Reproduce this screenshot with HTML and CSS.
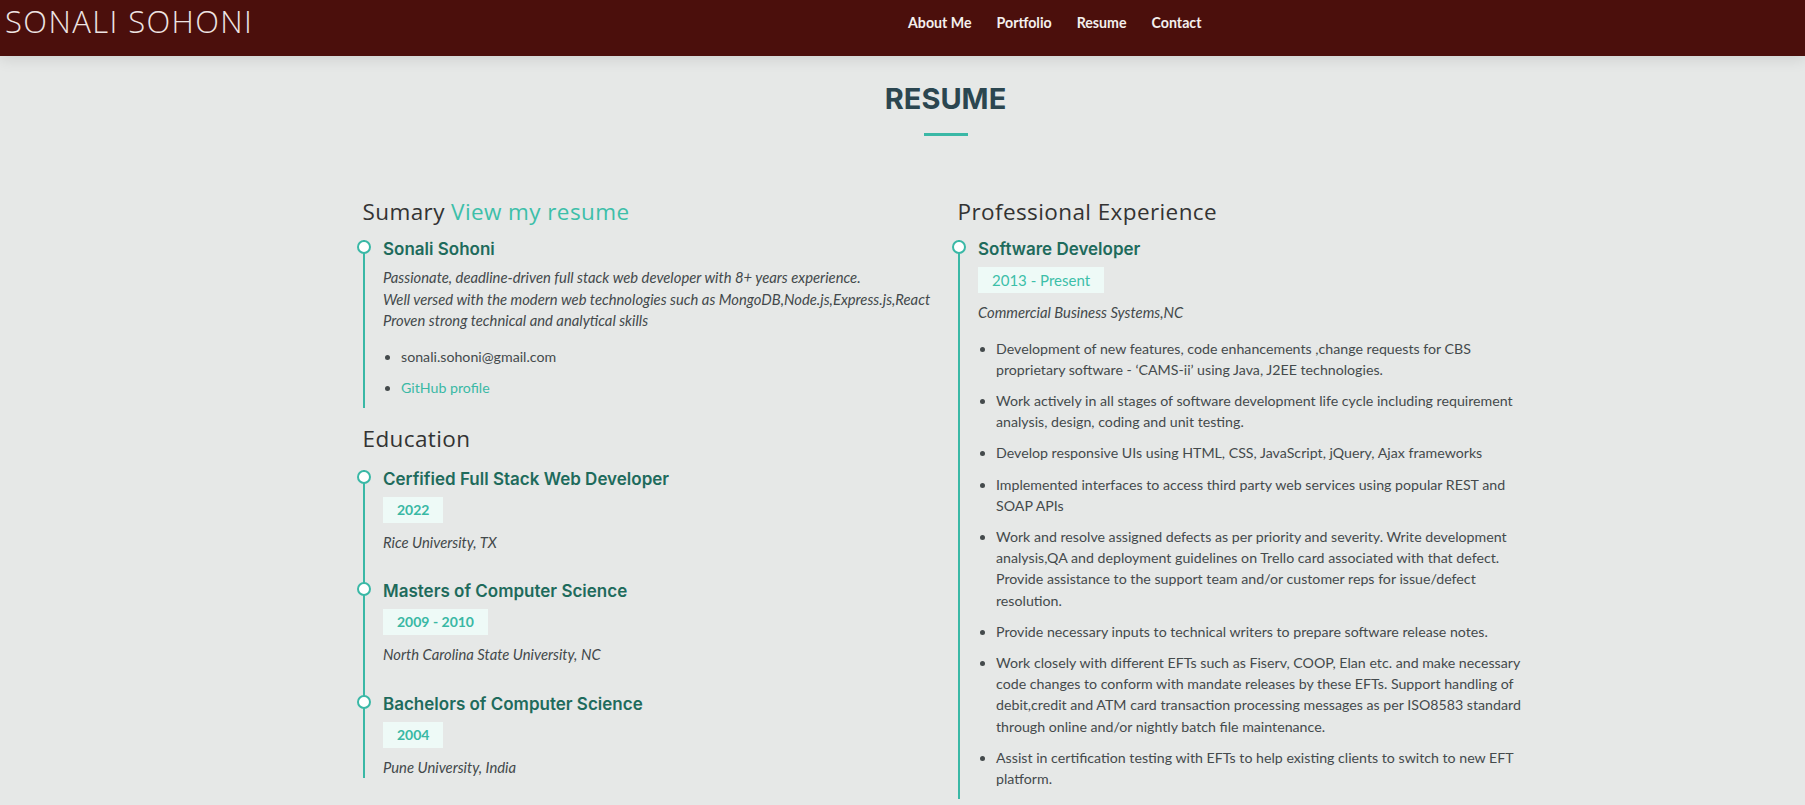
FILE: index.html
```html
<!DOCTYPE html>
<html lang="en">
<head>
<meta charset="utf-8">
<title>Sonali Sohoni - Resume</title>
<link rel="stylesheet" href="styles.css">
</head>
<body>
<header class="topbar">
  <a class="logo" href="#">SONALI SOHONI</a>
  <nav class="nav">
    <a href="#">About Me</a>
    <a href="#">Portfolio</a>
    <a href="#">Resume</a>
    <a href="#">Contact</a>
  </nav>
</header>
<main class="resume">
  <div class="container">
    <div class="section-title">
      <h2>RESUME</h2>
      <span class="title-line"></span>
    </div>
    <div class="resume-grid">
      <div class="col">
        <h3 class="resume-title">Sumary <a href="#">View my resume</a></h3>
        <div class="resume-item flush">
          <h4>Sonali Sohoni</h4>
          <p class="intro">Passionate, deadline-driven full stack web developer with 8+ years experience.<br>Well versed with the modern web technologies such as MongoDB,Node.js,Express.js,React<br>Proven strong technical and analytical skills</p>
          <ul>
            <li>sonali.sohoni@gmail.com</li>
            <li><a href="#">GitHub profile</a></li>
          </ul>
        </div>
        <h3 class="resume-title">Education</h3>
        <div class="resume-item">
          <h4>Cerfified Full Stack Web Developer</h4>
          <h5 class="badge edu">2022</h5>
          <p class="place">Rice University, TX</p>
        </div>
        <div class="resume-item">
          <h4>Masters of Computer Science</h4>
          <h5 class="badge edu">2009 - 2010</h5>
          <p class="place">North Carolina State University, NC</p>
        </div>
        <div class="resume-item flush">
          <h4>Bachelors of Computer Science</h4>
          <h5 class="badge edu">2004</h5>
          <p class="place">Pune University, India</p>
        </div>
      </div>
      <div class="col">
        <h3 class="resume-title">Professional Experience</h3>
        <div class="resume-item flush">
          <h4>Software Developer</h4>
          <h5 class="badge exp">2013 - Present</h5>
          <p class="place company">Commercial Business Systems,NC</p>
          <ul>
            <li>Development of new features, code enhancements ,change requests for CBS proprietary software - ‘CAMS-ii’ using Java, J2EE technologies.</li>
            <li>Work actively in all stages of software development life cycle including requirement analysis, design, coding and unit testing.</li>
            <li>Develop responsive UIs using HTML, CSS, JavaScript, jQuery, Ajax frameworks</li>
            <li>Implemented interfaces to access third party web services using popular REST and SOAP APIs</li>
            <li>Work and resolve assigned defects as per priority and severity. Write development analysis,QA and deployment guidelines on Trello card associated with that defect. Provide assistance to the support team and/or customer reps for issue/defect resolution.</li>
            <li>Provide necessary inputs to technical writers to prepare software release notes.</li>
            <li>Work closely with different EFTs such as Fiserv, COOP, Elan etc. and make necessary code changes to conform with mandate releases by these EFTs. Support handling of debit,credit and ATM card transaction processing messages as per ISO8583 standard through online and/or nightly batch file maintenance.</li>
            <li>Assist in certification testing with EFTs to help existing clients to switch to new EFT platform.</li>
          </ul>
        </div>
      </div>
    </div>
  </div>
</main>
</body>
</html>
```
FILE: styles.css
```css
html {
  scrollbar-width: none;
}
html::-webkit-scrollbar {
  display: none;
}
body {
  margin: 0;
  background: #e6e8e7;
  font-family: Lato, "Liberation Sans", sans-serif;
  font-size: 14px;
  color: #444;
}
a {
  text-decoration: none;
}

/* Top bar */
.topbar {
  position: relative;
  z-index: 2;
  height: 56px;
  box-sizing: border-box;
  padding-left: 5px;
  display: flex;
  align-items: flex-start;
  background: #4b0f0c;
  box-shadow: 0 2px 15px rgba(0, 0, 0, 0.12);
}
.logo {
  width: 903px;
  flex: none;
  padding-top: 6px;
  font-family: "Open Sans", sans-serif;
  font-weight: 300;
  font-size: 31px;
  line-height: 31px;
  letter-spacing: 1.4px;
  color: #eee4e3;
}
.nav {
  display: flex;
  gap: 25px;
  padding-top: 16px;
}
.nav a {
  font-family: Lato, sans-serif;
  font-weight: 700;
  font-size: 14.2px;
  line-height: 14.5px;
  color: #f4efee;
}

/* Resume section */
.resume {
  padding: 25px 0 0 86px;
}
.container {
  width: 1166px;
  margin: 0 auto;
}
.section-title {
  text-align: center;
}
.section-title h2 {
  margin: 0;
  font-family: Inter, sans-serif;
  font-weight: 700;
  font-size: 29px;
  line-height: 35px;
  color: #2b4650;
}
.title-line {
  display: block;
  width: 44px;
  height: 3px;
  margin: 17px auto 0;
  background: #3ab8a6;
}
.resume-grid {
  display: grid;
  grid-template-columns: 571px 567px;
  column-gap: 24px;
  margin-top: 63px;
}
.resume-title {
  margin: 18px 0 21px;
  font-family: "Open Sans", sans-serif;
  font-weight: 400;
  font-size: 22.5px;
  line-height: 26px;
  letter-spacing: 0.4px;
  color: #333;
}
.col > .resume-title:first-child {
  margin: 0 0 18px;
}
.resume-title a {
  color: #3dbfa9;
}

.resume-item {
  position: relative;
  border-left: 2px solid #3ab8a6;
  padding: 0 0 32px 18.5px;
}
.resume-item.flush {
  padding-bottom: 0;
}
.resume-item::before {
  content: "";
  position: absolute;
  left: -8px;
  top: 0;
  width: 14px;
  height: 14px;
  box-sizing: border-box;
  border: 2px solid #3ab8a6;
  border-radius: 50%;
  background: #fff;
}
.resume-item h4 {
  margin: -3px 0 9px;
  font-family: Inter, sans-serif;
  font-weight: 600;
  font-size: 17px;
  line-height: 18px;
  color: #1e6b5c;
}
.badge {
  display: table;
  margin: 0 0 9px;
  padding: 5px 14px;
  background: #eefaf7;
  line-height: 16px;
}
.badge.edu {
  font-family: Lato, sans-serif;
  font-weight: 700;
  font-size: 14px;
  color: #39b8a4;
}
.badge.exp {
  font-family: Lato, sans-serif;
  font-weight: 400;
  font-size: 15px;
  color: #3dbfa9;
}
.intro,
.place {
  margin: 0;
  font-style: italic;
  font-size: 14.8px;
  line-height: 21.5px;
  color: #43494b;
}
.intro,
.company {
  margin-bottom: 14px;
}
.resume-item ul {
  margin: 0;
  padding-left: 18px;
}
.resume-item li {
  font-size: 14.2px;
  line-height: 21.2px;
  padding-bottom: 10px;
  color: #444a4c;
}
.resume-item li a {
  color: #3ab9a5;
}
```
